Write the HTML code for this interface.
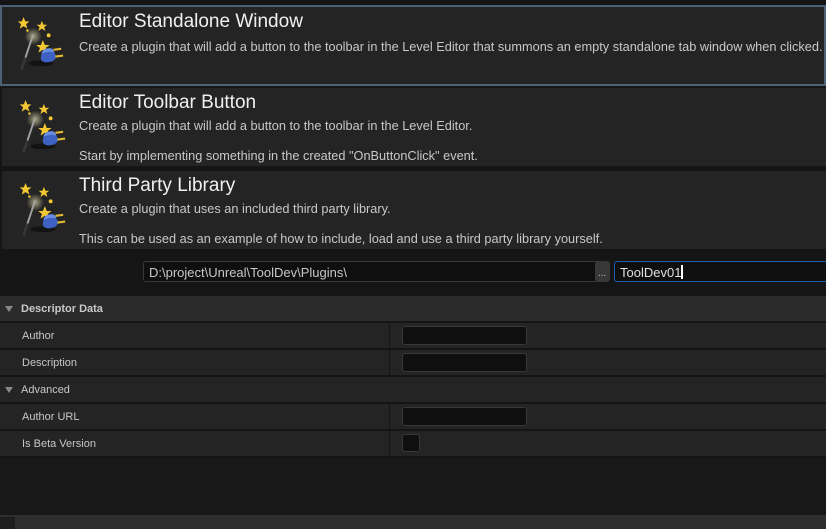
<!DOCTYPE html>
<html><head><meta charset="utf-8"><style>
*{margin:0;padding:0;box-sizing:border-box}
body{width:826px;height:529px;background:#151515;font-family:"Liberation Sans",sans-serif;position:relative;overflow:hidden;color:#c0c0c0}
.card{position:absolute;left:2px;width:824px;background:#242424}
.card.sel{left:0;width:826px;border:2px solid #4d6178;background:#242424}
.card .t{position:absolute;left:77px;top:4px;font-size:19px;color:#f0f0f0}
.card .d{position:absolute;left:77px;font-size:12.75px;color:#c8c8c8;white-space:nowrap}
.ic{position:absolute;left:12px;top:10px;width:54px;height:58px}
.abs{position:absolute}
.row{position:absolute;left:0;width:826px;height:26px;background:#242424;border-bottom:1px solid #151515;font-size:11px;color:#c8c8c8}
.row span{position:absolute;top:7px}
.box{position:absolute;left:402px;top:3px;width:125px;height:19px;background:#0f0f0f;border:1px solid #383838;border-radius:3px}
.div{position:absolute;left:389px;top:0;width:1px;height:26px;background:#151515}
.tri{position:absolute;left:5px;top:10px;width:0;height:0;border-left:4px solid transparent;border-right:4px solid transparent;border-top:6px solid #888}
</style></head><body>
<svg width="0" height="0" style="position:absolute"><defs>
<radialGradient id="gl"><stop offset="0" stop-color="#fff6c0" stop-opacity=".6"/><stop offset="1" stop-color="#fff6c0" stop-opacity="0"/></radialGradient>
<g id="wand">
<ellipse cx="30" cy="50" rx="13" ry="3" fill="#000" opacity=".5"/>
<circle cx="22" cy="22" r="9" fill="url(#gl)"/>
<line x1="22" y1="20" x2="10" y2="56" stroke="#a0a0a0" stroke-width="2"/>
<line x1="14" y1="44" x2="10" y2="56" stroke="#333" stroke-width="2"/>
<polygon points="12,2 13.8,6.5 18,6.5 14.6,9.5 16,14 12,11.5 8,14 9.4,9.5 6,6.5 10.2,6.5" fill="#f3c832"/>
<polygon points="31,6 32.6,10 36.5,10 33.4,12.5 34.6,16.5 31,14 27.4,16.5 28.6,12.5 25.5,10 29.4,10" fill="#f3c832"/>
<circle cx="38" cy="21" r="2" fill="#f3c832"/>
<circle cx="16" cy="16" r="1.3" fill="#f3c832"/>
<polygon points="32,26 34,31 39,31 35,34 36.5,39 32,36 27.5,39 29,34 25,31 30,31" fill="#f3c832"/>
<path d="M31 38 q4-5 11-3 l4 8 q-2 6 -10 6 q-7 0 -6 -6z" fill="#3d62c4"/>
<path d="M31 38 q4-5 11-3 l2 4 q-6 -2 -13 1z" fill="#6b8de0"/>
<line x1="43" y1="36" x2="51" y2="35" stroke="#e0b830" stroke-width="2.2"/>
<line x1="45" y1="43" x2="53" y2="42" stroke="#e0b830" stroke-width="2.2"/>
</g></defs></svg>

<div class="card sel" style="top:5px;height:81px">
<svg class="ic" viewBox="0 0 56 60" style="left:10px;top:8px"><use href="#wand"/></svg>
<div class="t">Editor Standalone Window</div>
<div class="d" style="top:32px">Create a plugin that will add a button to the toolbar in the Level Editor that summons an empty standalone tab window when clicked.</div>
</div>
<div class="card" style="top:88px;height:78px">
<svg class="ic" viewBox="0 0 56 60"><use href="#wand"/></svg>
<div class="t">Editor Toolbar Button</div>
<div class="d" style="top:30px">Create a plugin that will add a button to the toolbar in the Level Editor.</div>
<div class="d" style="top:60px">Start by implementing something in the created "OnButtonClick" event.</div>
</div>
<div class="card" style="top:171px;height:78px">
<svg class="ic" viewBox="0 0 56 60"><use href="#wand"/></svg>
<div class="t">Third Party Library</div>
<div class="d" style="top:30px">Create a plugin that uses an included third party library.</div>
<div class="d" style="top:60px">This can be used as an example of how to include, load and use a third party library yourself.</div>
</div>

<div class="abs" style="left:0;top:251px;width:826px;height:45px;background:#151515"></div>
<div class="abs" style="left:143px;top:261px;width:467px;height:21px;background:#0f0f0f;border:1px solid #383838;border-radius:3px;font-size:13px;color:#c8c8c8;padding:3px 0 0 5px">D:\project\Unreal\ToolDev\Plugins\</div>
<div class="abs" style="left:595px;top:262px;width:14px;height:19px;background:#383838;border-radius:2px;font-size:10px;color:#ccc;text-align:center;line-height:24px">...</div>
<div class="abs" style="left:614px;top:261px;width:214px;height:21px;background:#0f0f0f;border:1px solid #1f5fb0;border-radius:3px;font-size:13px;color:#e0e0e0;padding:3px 0 0 5px">ToolDev01<span style="display:inline-block;width:2px;height:14px;background:#fff;vertical-align:-2px"></span></div>

<div class="row" style="top:296px;background:#2b2b2b"><div class="tri"></div><span style="left:21px;font-weight:bold;color:#c8c8c8">Descriptor Data</span></div>
<div class="row" style="top:323px"><span style="left:22px">Author</span><div class="div"></div><div class="box"></div></div>
<div class="row" style="top:350px"><span style="left:22px">Description</span><div class="div"></div><div class="box"></div></div>
<div class="row" style="top:377px"><div class="tri"></div><span style="left:21px">Advanced</span></div>
<div class="row" style="top:404px"><span style="left:22px">Author URL</span><div class="div"></div><div class="box"></div></div>
<div class="row" style="top:431px"><span style="left:22px">Is Beta Version</span><div class="div"></div><div class="box" style="width:18px;height:18px"></div></div>

<div class="abs" style="left:0;top:458px;width:826px;height:57px;background:#181818"></div>
<div class="abs" style="left:0;top:515px;width:826px;height:2px;background:#2e2e2e"></div>
<div class="abs" style="left:0;top:517px;width:826px;height:12px;background:#2e2e2e"></div>
<div class="abs" style="left:0;top:517px;width:15px;height:12px;background:#1e1e1e"></div>
</body></html>
